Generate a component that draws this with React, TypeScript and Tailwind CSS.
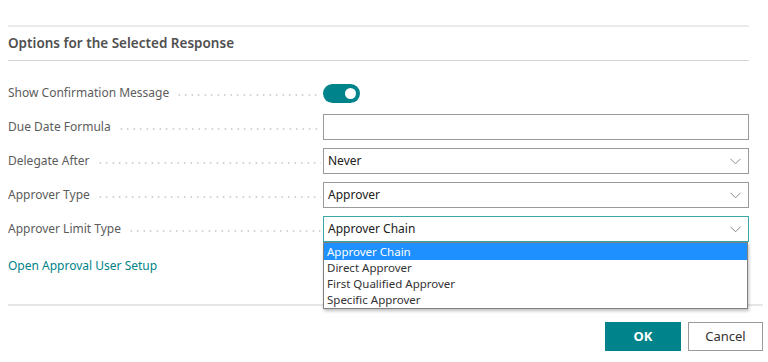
import React from "react";

const Dots = () => (
  <div className="flex-1 h-[4px] mt-[3px] ml-[7px] mr-[2px] [background-image:radial-gradient(circle,#c4c4c4_0.7px,transparent_1.1px)] [background-size:6.5px_4px] bg-repeat-x" />
);

const Chevron = () => (
  <svg width="11" height="7" viewBox="0 0 11 7" className="shrink-0">
    <path d="M0.5 0.8 L5.5 5.8 L10.5 0.8" fill="none" stroke="#8a8a8a" strokeWidth="1" />
  </svg>
);

const Row = ({ label, children }: { label: string; children: React.ReactNode }) => (
  <div className="flex items-center h-[26px]">
    <div className="w-[315px] flex items-center text-[12px] text-[#5c5c5c]">
      <span className="whitespace-nowrap">{label}</span>
      <Dots />
    </div>
    <div className="flex-1">{children}</div>
  </div>
);

const Select = ({ value, focused }: { value: string; focused?: boolean }) => (
  <div
    className={
      "h-[26px] flex items-center justify-between pl-[4px] pr-[7px] border text-[12px] text-[#212121] bg-white " +
      (focused ? "border-[#3aa8a8]" : "border-[#9a9a9a]")
    }
  >
    <span>{value}</span>
    <Chevron />
  </div>
);

export default function App() {
  return (
    <div className="w-[768px] h-[362px] bg-white relative overflow-hidden font-['Noto_Sans',sans-serif]">
      <div className="pl-[8px] pr-[19px] pt-[25px]">
        <div className="h-[2px] bg-[#ebebeb]" />
        <div className="h-[33px] flex items-center text-[13.5px] font-semibold text-[#505050]">
          Options for the Selected Response
        </div>
        <div className="h-px bg-[#d4d4d4]" />
        <div className="flex flex-col gap-[8px] mt-[19px]">
          <Row label="Show Confirmation Message">
            <div className="w-[37px] h-[19px] rounded-full bg-[#00838a] flex items-center justify-end pr-[4px]">
              <div className="w-[11px] h-[11px] rounded-full bg-white" />
            </div>
          </Row>
          <Row label="Due Date Formula">
            <div className="h-[26px] border border-[#9a9a9a] bg-white" />
          </Row>
          <Row label="Delegate After">
            <Select value="Never" />
          </Row>
          <Row label="Approver Type">
            <Select value="Approver" />
          </Row>
          <Row label="Approver Limit Type">
            <Select value="Approver Chain" focused />
          </Row>
        </div>
        <div className="mt-[15px] h-[18px] flex items-center text-[12px] text-[#00838a]">
          Open Approval User Setup
        </div>
      </div>
      <div className="pl-[8px] pr-[5px] mt-[29px]">
        <div className="h-[2px] bg-[#e6e6e6]" />
        <div className="flex justify-end gap-[7px] mt-[16px]">
          <button className="w-[76px] h-[29px] bg-[#00838a] text-white text-[13px] font-bold">OK</button>
          <button className="w-[75px] h-[29px] bg-white border border-[#9a9a9a] text-[#333] text-[13px]">Cancel</button>
        </div>
      </div>
      <div className="absolute left-[323px] top-[242px] w-[425px] bg-white border border-[#808080] shadow-[1px_2px_3px_rgba(0,0,0,0.25)] text-[11.5px] leading-[16px] text-[#333]">
        <div className="h-[17px] bg-[#1e90ff] text-white pl-[3px] flex items-center">Approver Chain</div>
        <div className="h-[16px] pl-[3px] flex items-center">Direct Approver</div>
        <div className="h-[16px] pl-[3px] flex items-center">First Qualified Approver</div>
        <div className="h-[16px] pl-[3px] flex items-center">Specific Approver</div>
      </div>
    </div>
  );
}
